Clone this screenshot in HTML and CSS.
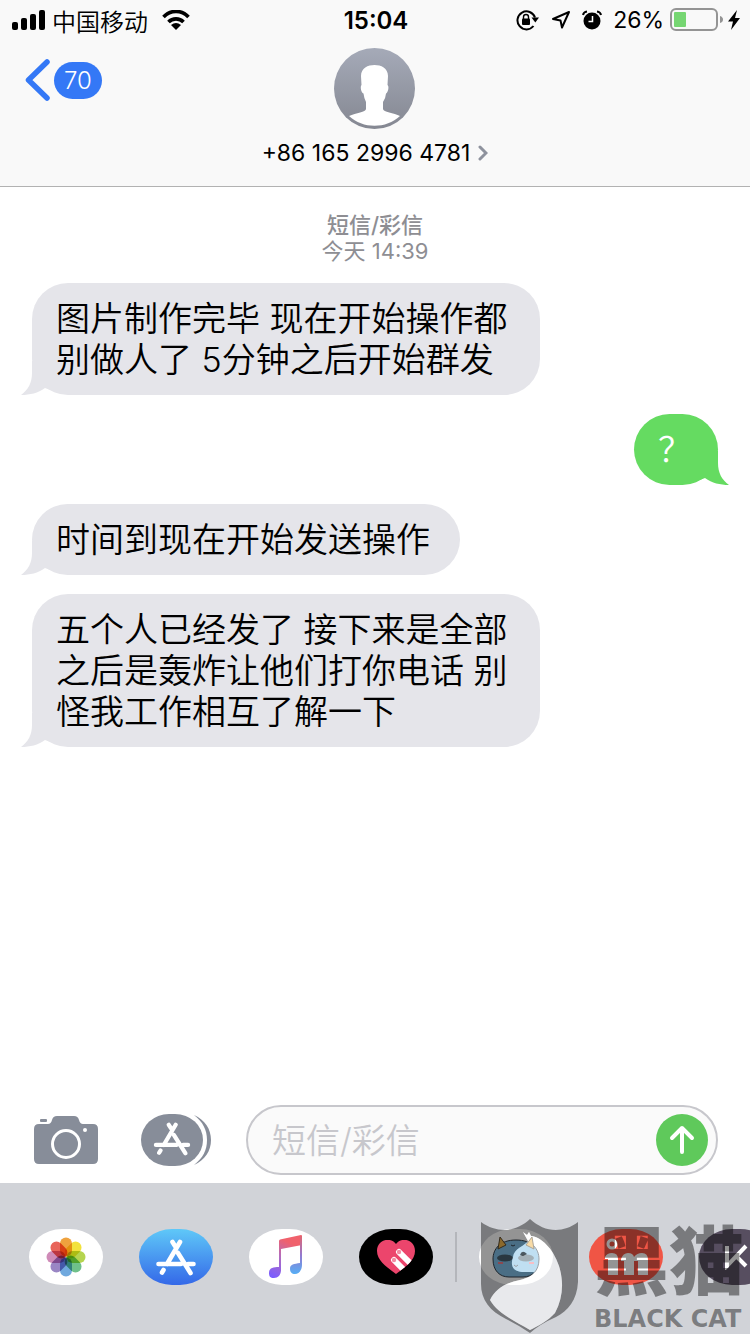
FILE: index.html
```html
<!DOCTYPE html>
<html lang="zh-CN">
<head>
  <meta charset="utf-8">
  <meta name="viewport" content="width=device-width, initial-scale=1">
  <title>短信</title>
  <link rel="stylesheet" href="styles.css">
</head>
<body>
  <svg class="defs" aria-hidden="true">
    <symbol id="storeMark" viewBox="0 0 40 37">
      <path d="M24 3 L11 25 M7.5 31 L6 33.5 M2.5 25 H25 M32 25 H37.5 M16.5 3 L19 7 M22 14 L34.5 34" fill="none" stroke="#fff" stroke-width="4.6" stroke-linecap="round"/>
    </symbol>
    <symbol id="tailShape" viewBox="0 0 32 34">
      <path d="M32 0 H11 V12 C11 22 7 29 0 34 C9 34 17 32 24 27 L32 30 Z"/>
    </symbol>
  </svg>

  <header class="header">
    <div class="status">
      <div class="status-left">
        <svg width="34" height="20" viewBox="0 0 34 20">
          <rect x="0" y="12" width="6" height="8" rx="2"/>
          <rect x="9" y="8" width="6" height="12" rx="2"/>
          <rect x="18" y="4" width="6" height="16" rx="2"/>
          <rect x="27" y="0" width="6" height="20" rx="2"/>
        </svg>
        <span class="carrier">中国移动</span>
        <svg width="28" height="20" viewBox="0 0 28 20">
          <path d="M1.5 7 C8.5 -0.5 19.5 -0.5 26.5 7 M6.5 12 C10.5 7.8 17.5 7.8 21.5 12" fill="none" stroke="#000" stroke-width="3.6"/>
          <path d="M9 15 Q14 11 19 15 L14 20 Z"/>
        </svg>
      </div>
      <div class="clock">15:04</div>
      <div class="status-right">
        <svg width="24" height="22" viewBox="0 0 24 22">
          <path d="M17.5 17 A9 9 0 1 1 19 8.5" fill="none" stroke="#000" stroke-width="2"/>
          <path d="M15.5 8.5 H23 L19.3 13.5 Z"/>
          <rect x="6" y="9.5" width="8" height="6.5" rx="1"/>
          <path d="M7.5 10 V8 A2.5 2.5 0 0 1 12.5 8 V10" fill="none" stroke="#000" stroke-width="1.4"/>
        </svg>
        <svg width="20" height="20" viewBox="0 0 20 20">
          <path d="M18 2 L11 17.5 L9.5 10.5 L2 9 Z" fill="none" stroke="#000" stroke-width="2" stroke-linejoin="round"/>
        </svg>
        <svg width="20" height="20" viewBox="0 0 20 20">
          <circle cx="10" cy="11" r="8.5"/>
          <path d="M1 5 Q1.5 2 5 1.5 M19 5 Q18.5 2 15 1.5" fill="none" stroke="#000" stroke-width="2"/>
          <path d="M10.5 6 V11.5 H6.5" fill="none" stroke="#fff" stroke-width="1.5"/>
        </svg>
        <span>26%</span>
        <svg class="battery" width="54" height="24" viewBox="0 0 54 24">
          <rect x="1" y="1" width="46" height="21" rx="5" fill="none" stroke="#949494" stroke-width="2"/>
          <rect x="4" y="4" width="12" height="15" rx="1" fill="#76d672"/>
          <path d="M50 8 Q53 9 53 11.5 Q53 14 50 15 Z" fill="#949494"/>
        </svg>
        <svg class="bolt" width="12" height="20" viewBox="0 0 12 20">
          <path d="M9 0 L0 11.5 H5 L3 20 L12 8 H7 Z"/>
        </svg>
      </div>
    </div>

    <nav class="nav">
      <a class="back" href="#" aria-label="返回">
        <svg width="26" height="42" viewBox="0 0 26 42">
          <path d="M23 3 L4.5 21 L23 39" fill="none" stroke="#3478f6" stroke-width="5.5" stroke-linecap="round" stroke-linejoin="round"/>
        </svg>
        <span class="badge">70</span>
      </a>
      <a class="contact" href="#">
        <svg width="81" height="81" viewBox="0 0 81 81">
          <defs>
            <linearGradient id="avatarFill" x1="0" y1="0" x2="0" y2="1">
              <stop offset="0" stop-color="#a5aab8"/>
              <stop offset="1" stop-color="#858892"/>
            </linearGradient>
          </defs>
          <circle cx="40.5" cy="40.5" r="40.5" fill="url(#avatarFill)"/>
          <path d="M40.5 17 C47 17 54 20 54 28 L53.5 37 C55.5 38 54 45 52 45.5 Q51.5 51 49 54 V61 C49 64 60 65 66 68 C52 81 29 81 15 68 C22 65 32 64 32 61 V54 Q30 50 29.5 45.5 C27 45 26 38 27.5 37 L27 28 C27 20 34 17 40.5 17 Z" fill="#fff"/>
        </svg>
        <span class="number">+86 165 2996 4781
          <svg width="10" height="16" viewBox="0 0 10 16">
            <path d="M2 2 L8 8 L2 14" fill="none" stroke="#8e929d" stroke-width="3" stroke-linecap="round"/>
          </svg>
        </span>
      </a>
    </nav>
  </header>

  <main class="messages">
    <p class="stamp"><strong>短信/彩信</strong><br>今天 14:39</p>
    <div class="bubble">图片制作完毕 现在开始操作都别做人了 5分钟之后开始群发<svg class="tail"><use href="#tailShape"/></svg></div>
    <div class="bubble sent">？<svg class="tail"><use href="#tailShape"/></svg></div>
    <div class="bubble">时间到现在开始发送操作<svg class="tail"><use href="#tailShape"/></svg></div>
    <div class="bubble">五个人已经发了 接下来是全部之后是轰炸让他们打你电话 别怪我工作相互了解一下<svg class="tail"><use href="#tailShape"/></svg></div>
  </main>

  <form class="composer">
    <button class="tool" type="button" aria-label="相机">
      <svg width="64" height="48" viewBox="0 0 64 48" fill="#878d99">
        <path d="M5 8 H14 Q17 8 18 4 Q19 0 23 0 H40 Q44 0 45 4 Q46 8 49 8 H59 Q64 8 64 13 V43 Q64 48 59 48 H5 Q0 48 0 43 V13 Q0 8 5 8 Z"/>
        <rect x="6" y="3" width="7" height="3" rx="1"/>
        <circle cx="32" cy="28" r="13.5" fill="none" stroke="#fff" stroke-width="3"/>
        <circle cx="51" cy="14" r="2" fill="#fff"/>
      </svg>
    </button>
    <button class="tool store" type="button" aria-label="App">
      <svg width="70" height="52" viewBox="0 0 70 52">
        <path d="M53 1 C64 6 70 15 70 26 C70 37 64 46 53 51 C62 44 66 36 66 26 C66 16 62 8 53 1 Z" fill="#878d99"/>
        <rect x="0" y="0" width="62" height="52" rx="28" ry="26" fill="#878d99"/>
        <use href="#storeMark" x="12" y="8" width="38" height="34"/>
      </svg>
    </button>
    <div class="field">
      <input type="text" placeholder="短信/彩信" aria-label="短信/彩信">
      <button class="send" type="submit" aria-label="发送">
        <svg width="28" height="30" viewBox="0 0 28 30">
          <path d="M14 27 V3 M4 13 L14 3 L24 13" fill="none" stroke="#fff" stroke-width="4" stroke-linecap="round" stroke-linejoin="round"/>
        </svg>
      </button>
    </div>
  </form>

  <footer class="dock">
    <button class="app" type="button" aria-label="照片">
      <svg width="40" height="40" viewBox="-20 -20 40 40" class="petals">
        <rect x="-6" y="-19.5" width="12" height="19" rx="6" fill="#efa23e"/>
        <rect x="-6" y="-19.5" width="12" height="19" rx="6" fill="#f2e23c" transform="rotate(45)"/>
        <rect x="-6" y="-19.5" width="12" height="19" rx="6" fill="#b5d44f" transform="rotate(90)"/>
        <rect x="-6" y="-19.5" width="12" height="19" rx="6" fill="#6fc08a" transform="rotate(135)"/>
        <rect x="-6" y="-19.5" width="12" height="19" rx="6" fill="#70a9de" transform="rotate(180)"/>
        <rect x="-6" y="-19.5" width="12" height="19" rx="6" fill="#9a86c4" transform="rotate(225)"/>
        <rect x="-6" y="-19.5" width="12" height="19" rx="6" fill="#cf8bb8" transform="rotate(270)"/>
        <rect x="-6" y="-19.5" width="12" height="19" rx="6" fill="#e8645a" transform="rotate(315)"/>
      </svg>
    </button>
    <button class="app app-store" type="button" aria-label="App Store">
      <svg width="40" height="37"><use href="#storeMark"/></svg>
    </button>
    <button class="app" type="button" aria-label="音乐">
      <svg width="36" height="44" viewBox="0 0 36 44">
        <defs>
          <linearGradient id="noteFill" gradientUnits="userSpaceOnUse" x1="24" y1="4" x2="4" y2="42">
            <stop offset="0.1" stop-color="#f0616c"/>
            <stop offset="0.5" stop-color="#b06cc0"/>
            <stop offset="1" stop-color="#7a5cff"/>
          </linearGradient>
          <linearGradient id="noteBlue" x1="0" y1="0" x2="0" y2="1">
            <stop offset="0" stop-color="#e2646f"/>
            <stop offset="0.5" stop-color="#9479cf"/>
            <stop offset="1" stop-color="#56aef5"/>
          </linearGradient>
        </defs>
        <path d="M11 6 Q11 5 12 4.5 L33 0 Q34 0 34 1 L34 10 L13 14 V35 C13 40 10 43 6 43 C2 43 1 41 1 38 C1 33 5 32 11 32 Z" fill="url(#noteFill)"/>
        <path d="M32 1 H34 V30 C34 35 31 39 27 39 C23 39 22 36 22 34 C22 29 26 29 32 28 Z" fill="url(#noteBlue)"/>
      </svg>
    </button>
    <button class="app app-touch" type="button" aria-label="Digital Touch">
      <svg width="38" height="34" viewBox="0 0 38 34">
        <defs>
          <clipPath id="heart"><path d="M19 34 C11 28 0 21 0 11 C0 0 13 -4 19 4 C25 -4 38 0 38 11 C38 21 27 28 19 34 Z"/></clipPath>
        </defs>
        <g clip-path="url(#heart)">
          <rect width="38" height="34" fill="#ec456c"/>
          <path d="M17 20 L29 32 M22 12 L36 26" stroke="#fff" stroke-width="6" stroke-linecap="round"/>
          <circle cx="17" cy="20" r="2.2" fill="#f28ca3"/>
          <circle cx="22" cy="12" r="2.2" fill="#f28ca3"/>
        </g>
      </svg>
    </button>
    <span class="divider"></span>
    <button class="app" type="button" aria-label="贴纸">
      <svg width="48" height="42" viewBox="0 0 48 42">
        <path d="M24 4 C40 4 47 13 47 23 C47 35 40 41 31 41 H17 C8 41 1 35 1 23 C1 13 8 4 24 4 Z" fill="#80bee5" stroke="#35404c"/>
        <path d="M8 1 L14 9 L6 13 Z M40 1 L34 9 L42 13 Z" fill="#f0b64c" stroke="#5a4a30"/>
        <ellipse cx="13" cy="22" rx="8" ry="3.5" fill="#48606e"/>
        <ellipse cx="34" cy="22" rx="8" ry="3.5" fill="#48606e"/>
        <path d="M6 27 H11 M37 27 H42" stroke="#f07c8a" stroke-width="2"/>
        <path d="M22 29 Q24 32 26 29 M19 9 Q21 11 23 9" fill="none" stroke="#35404c"/>
      </svg>
    </button>
    <button class="app app-red" type="button" aria-label="in">
      <svg width="46" height="40" viewBox="0 0 46 40">
        <circle cx="9" cy="7" r="4" fill="none" stroke="#fff" stroke-width="3"/>
        <path d="M2 20 Q4 16 9 16 Q15 16 15 22 V38 H5 V22 H2 Z M18 22 Q20 16 25 16 Q30 16 31 20 Q34 16 39 16 Q45 16 45 23 V38 H35 V24 H31 V38 H21 V24 H18 Z" fill="#fff"/>
      </svg>
    </button>
    <button class="app app-dark" type="button" aria-label="K">
      <svg width="24" height="26" viewBox="0 0 24 26">
        <path d="M3 2 V22 L22 2 M12 12 L22 22" fill="none" stroke="#fff" stroke-width="4"/>
      </svg>
    </button>
  </footer>

  <div class="watermark">
    <svg width="100" height="116" viewBox="0 0 100 116">
      <defs>
        <path id="catTail" d="M43 14 L47 17 L49 14 L51 18 C61 19 73 30 79 48 C84 64 83 80 75 95 C68 103 58 108 50 112 C35 103 18 96 10 82 C16 70 26 65 40 62 C48 60 53 57 54 54 H42 C33 53 30 48 33 39 C34 30 45 28 48 23 Z"/>
        <mask id="shieldMask">
          <rect width="100" height="116" fill="#fff"/>
          <use href="#catTail" fill="#000"/>
        </mask>
      </defs>
      <path d="M1 4 C18 16 36 14 50 1 C64 14 82 16 98 4 V64 C97 82 88 93 76 99 Q60 106 50 115 Q40 108 26 101 C10 93 1 82 1 66 Z" fill="#000" fill-opacity="0.42" mask="url(#shieldMask)"/>
      <use href="#catTail" fill="#fff" fill-opacity="0.5"/>
      <path d="M40 37 Q42 31 47 36 L43 38 Z" fill="#000" fill-opacity="0.6"/>
    </svg>
    <div class="brand">
      <span class="brand-cn">黑猫</span>
      <span class="brand-en">BLACK CAT</span>
    </div>
  </div>
</body>
</html>
```
FILE: styles.css
```css
* {
  box-sizing: border-box;
}

body {
  margin: 0;
  min-height: 100vh;
  display: flex;
  flex-direction: column;
  position: relative;
  overflow-x: hidden;
  background: #fff;
  color: #000;
  font-family: Inter, "Noto Sans CJK SC", sans-serif;
}

a {
  color: inherit;
  text-decoration: none;
}

button {
  padding: 0;
  border: 0;
  background: none;
}

svg {
  display: block;
  flex: none;
}

.defs {
  position: absolute;
  width: 0;
  height: 0;
}

/* status bar and contact */
.header {
  background: #f9f9f9;
  border-bottom: 1px solid #b2b2b2;
}

.status {
  display: grid;
  grid-template-columns: 1fr auto 1fr;
  align-items: center;
  height: 40px;
  padding: 0 10px 0 12px;
  font-size: 23px;
}

.status-left,
.status-right {
  display: flex;
  align-items: center;
  gap: 6px;
}

.status-right {
  justify-content: flex-end;
  gap: 11px;
}

.carrier {
  margin-right: 8px;
  font-size: 24px;
  font-weight: 350;
}

.clock {
  font-size: 24px;
  font-weight: 600;
}

.battery {
  margin-left: -5px;
}

.bolt {
  margin-left: -7px;
}

.nav {
  display: grid;
  grid-template-columns: 1fr auto 1fr;
  align-items: start;
  padding: 8px 24px 20px;
}

.back {
  display: flex;
  align-items: center;
  gap: 4px;
  margin-top: 11px;
}

.badge {
  padding: 0 10px;
  border-radius: 19px;
  background: #3478f6;
  color: #fff;
  font-size: 24px;
  font-weight: 350;
  line-height: 37px;
}

.contact {
  display: flex;
  flex-direction: column;
  align-items: center;
  gap: 11px;
}

.number {
  display: flex;
  align-items: center;
  gap: 8px;
  font-size: 23px;
  line-height: 26px;
}

/* conversation */
.messages {
  flex: 1;
  display: flex;
  flex-direction: column;
  align-items: flex-start;
  gap: 19px;
  padding: 25px 32px;
}

.stamp {
  align-self: center;
  margin: 0;
  color: #8e8e93;
  font-size: 22px;
  line-height: 26px;
  text-align: center;
}

.stamp strong {
  font-weight: 500;
}

.bubble {
  position: relative;
  max-width: 508px;
  padding: 15px 30px 15px 24px;
  border-radius: 36px;
  background: #e5e5ea;
  font-size: 34px;
  font-weight: 350;
  line-height: 41px;
}

.sent {
  align-self: flex-end;
  padding-right: 26px;
  background: #65db61;
  color: #fff;
}

.tail {
  position: absolute;
  left: -11px;
  bottom: 0;
  width: 32px;
  height: 34px;
  fill: #e5e5ea;
}

.sent .tail {
  left: auto;
  right: -11px;
  fill: #65db61;
  transform: scaleX(-1);
}

/* message entry */
.composer {
  display: flex;
  align-items: center;
  padding: 0 32px 8px 34px;
}

.store {
  margin: 0 35px 0 43px;
}

.field {
  flex: 1;
  min-width: 0;
  display: flex;
  align-items: center;
  height: 70px;
  padding: 0 8px 0 24px;
  border: 2px solid #c7c7cc;
  border-radius: 35px;
  background: #fafafa;
}

.field input {
  flex: 1;
  min-width: 0;
  padding: 0;
  border: 0;
  outline: 0;
  background: none;
  font: inherit;
  font-size: 34px;
  font-weight: 350;
}

.field input::placeholder {
  color: #c7c7cc;
}

.send {
  flex: none;
  display: flex;
  align-items: center;
  justify-content: center;
  width: 52px;
  height: 52px;
  border-radius: 50%;
  background: #5fc95b;
}

/* app strip */
.dock {
  display: flex;
  align-items: center;
  gap: 36px;
  height: 151px;
  padding: 0 0 3px 29px;
  overflow: hidden;
  background: #d1d3d8;
}

.app {
  flex: none;
  display: flex;
  align-items: center;
  justify-content: center;
  width: 74px;
  height: 56px;
  border-radius: 33px / 28px;
  background: #fff;
}

.petals {
  isolation: isolate;
}

.petals rect {
  mix-blend-mode: multiply;
}

.app-store {
  background: linear-gradient(#5fc8f8, #3468e8);
}

.app-touch {
  background: #000;
}

.app-red {
  background: #f05545;
}

.app-dark {
  background: #574e60;
}

.divider {
  flex: none;
  width: 2px;
  height: 50px;
  margin: 0 -14px;
  background: #b4b6bb;
}

.watermark {
  position: absolute;
  right: 0;
  bottom: 0;
  display: flex;
  align-items: flex-end;
  gap: 14px;
  pointer-events: none;
}

.brand {
  display: flex;
  flex-direction: column;
  width: 156px;
  color: rgba(0, 0, 0, 0.42);
}

.brand-cn {
  margin-bottom: 12px;
  font-family: "Noto Sans CJK SC", sans-serif;
  font-size: 75px;
  font-weight: 900;
  line-height: 70px;
}

.brand-en {
  font-family: "DejaVu Sans", sans-serif;
  font-size: 24px;
  font-weight: 700;
  line-height: 30px;
  white-space: nowrap;
}
```
